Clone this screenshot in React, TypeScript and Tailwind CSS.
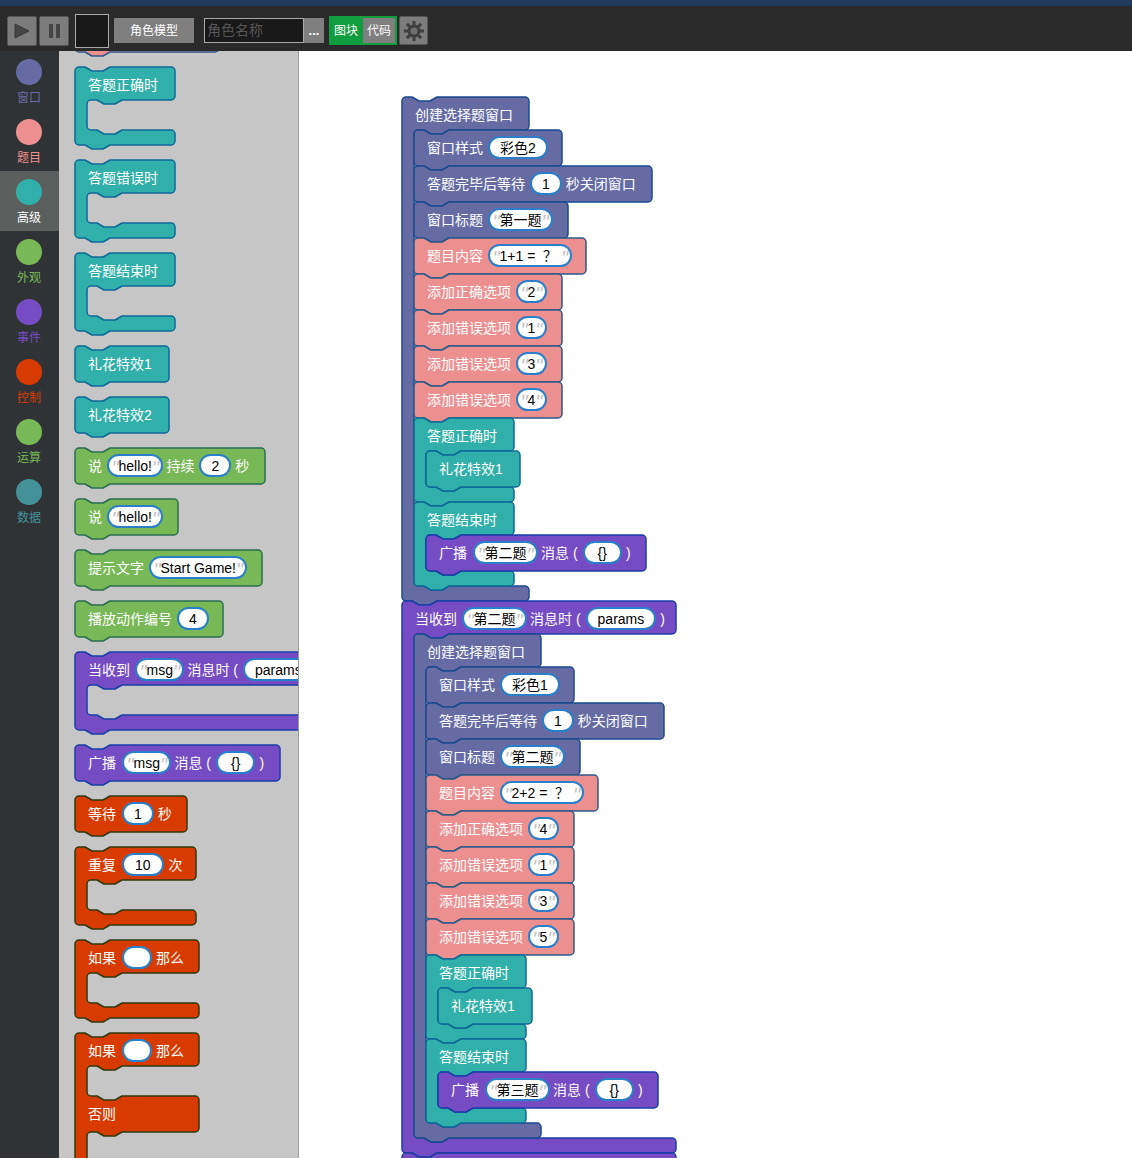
import type { ReactNode } from 'react';

type Theme = { fill: string; line: string };

const WIN: Theme = { fill: '#666ca3', line: '#1a4a90' };
const QUIZ: Theme = { fill: '#ec8f8f', line: '#2c5a8a' };
const FX: Theme = { fill: '#31afaa', line: '#0d6a96' };
const LOOK: Theme = { fill: '#78b856', line: '#2a6e50' };
const EVENT: Theme = { fill: '#764cc4', line: '#1a3ea8' };
const CTRL: Theme = { fill: '#d83b00', line: '#2f3a10' };

const HEAD = 33;
const FOOT = 15;

// one cavity of a C shaped block
type Arm = { head: number; gap: number };

const topEdge = (w: number) => `M0 4 A4 4 0 0 1 4 0 H10 L17 4 H28 L35 0 H${w - 4} A4 4 0 0 1 ${w} 4`;
const bottomEdge = (w: number, y: number) => `V${y - 4} A4 4 0 0 1 ${w - 4} ${y} H35 L28 ${y + 4} H17 L10 ${y} H4 A4 4 0 0 1 0 ${y - 4} Z`;

function stmtPath(w: number, h: number) {
  return topEdge(w - 2) + bottomEdge(w - 2, h);
}

function capPath(width: number, arms: Arm[]) {
  const w = width - 2;
  let d = topEdge(w);
  let y = 0;
  arms.forEach(({ head, gap }) => {
    y += head;
    const end = y + gap;
    d += `V${y - 4} A4 4 0 0 1 ${w - 4} ${y} H47 L40 ${y + 4} H29 L22 ${y} H16 A4 4 0 0 0 12 ${y + 4} V${end - 4} A4 4 0 0 0 16 ${end} H22 L29 ${end + 4} H40 L47 ${end} H${w - 4} A4 4 0 0 1 ${w} ${end + 4}`;
    y = end;
  });
  return d + bottomEdge(w, y + FOOT);
}

function Shape({ d, theme }: { d: string; theme: Theme }) {
  return (
    <svg className="absolute left-[0.75px] top-0 overflow-visible" width="1" height="1">
      <path d={d} fill={theme.fill} stroke={theme.line} strokeWidth="1.5" strokeLinejoin="round" />
    </svg>
  );
}

function Row({ children, className }: { children: ReactNode; className: string }) {
  return <div className={`relative flex items-center gap-[5px] whitespace-nowrap pl-[14px] text-[14px] text-white ${className}`}>{children}</div>;
}

function Stmt({ theme, w, children }: { theme: Theme; w: number; children?: ReactNode }) {
  return (
    <div className="relative h-[36px]" style={{ width: w }}>
      <Shape d={stmtPath(w, 36)} theme={theme} />
      <Row className="h-[36px]">{children}</Row>
    </div>
  );
}

function Cap({ theme, w, gap = 30, label, children }: { theme: Theme; w: number; gap?: number; label: ReactNode; children?: ReactNode }) {
  return (
    <div className="relative" style={{ width: w }}>
      <Shape d={capPath(w, [{ head: HEAD, gap }])} theme={theme} />
      <Row className="h-[33px] pt-[3px]">{label}</Row>
      <div className="relative pl-[12px]" style={{ height: gap }}>{children}</div>
      <div className="h-[15px]" />
    </div>
  );
}

function Pill({ children, className = '' }: { children?: ReactNode; className?: string }) {
  return (
    <span className={`mb-[1px] flex h-[23px] shrink-0 items-center justify-center rounded-full border-2 border-[#2a7fc8] bg-white pt-[1px] text-[14px] text-black ${className}`}>
      {children}
    </span>
  );
}

const Num = ({ v }: { v: string }) => <Pill className="-mr-px min-w-[31px] px-[10px]">{v}</Pill>;
const Sel = ({ v }: { v: string }) => <Pill className="-mr-px px-[10px]">{v}</Pill>;
const Blank = () => <Pill className="-mr-px ml-[1px] w-[30px]" />;

function Quote() {
  return <span className="mt-[1px] h-[16px] w-[7px] self-start text-[20px] italic leading-none text-[#c4c4c4]">"</span>;
}

function Str({ v }: { v: string }) {
  return (
    <Pill className="-mr-[2px] px-[2.5px]">
      <Quote />
      <span className="whitespace-pre">{v}</span>
      <Quote />
    </Pill>
  );
}

function Broadcast({ to, w }: { to: string; w: number }) {
  return (
    <Stmt theme={EVENT} w={w}>
      <span className="mr-[1px]">广播</span>
      <Str v={to} />
      <span>消息 (</span>
      <Pill className="-mr-px px-[13px]">{'{}'}</Pill>
      <span>)</span>
    </Stmt>
  );
}

function Question(props: { style: string; title: string; text: string; right: string; wrong: string[]; next: string }) {
  const { style, title, text, right, wrong, next } = props;
  return (
    <Cap theme={WIN} w={129} gap={456} label="创建选择题窗口">
      <Stmt theme={WIN} w={150}>窗口样式<Sel v={style} /></Stmt>
      <Stmt theme={WIN} w={240}>答题完毕后等待<Num v="1" />秒关闭窗口</Stmt>
      <Stmt theme={WIN} w={156}>窗口标题<Str v={title} /></Stmt>
      <Stmt theme={QUIZ} w={174}>题目内容<Str v={text} /></Stmt>
      <Stmt theme={QUIZ} w={150}>添加正确选项<Str v={right} /></Stmt>
      {wrong.map((item) => (
        <Stmt key={item} theme={QUIZ} w={150}>添加错误选项<Str v={item} /></Stmt>
      ))}
      <Cap theme={FX} w={102} gap={36} label="答题正确时">
        <Stmt theme={FX} w={96}>礼花特效1</Stmt>
      </Cap>
      <Cap theme={FX} w={102} gap={36} label="答题结束时">
        <Broadcast to={next} w={222} />
      </Cap>
    </Cap>
  );
}

function Toolbar() {
  return (
    <div className="shrink-0">
      <div className="h-[6px] bg-[#1f3a5a]" />
      <div className="flex h-[45px] items-center bg-[#2a2a2a] pl-[7px] pt-[4px]">
        <button className="flex h-[30px] w-[30px] items-center justify-center rounded-[2px] border border-[#555] bg-[#7c7c7c]">
          <svg width="18" height="18" viewBox="0 0 18 18">
            <path d="M2 2 L16 9 L2 16 Z" fill="#444" stroke="#3a3a3a" />
          </svg>
        </button>
        <button className="ml-[2px] flex h-[30px] w-[30px] items-center justify-center gap-[3px] rounded-[2px] border border-[#555] bg-[#7c7c7c]">
          <span className="h-[14px] w-[4px] bg-[#444]" />
          <span className="h-[14px] w-[4px] bg-[#444]" />
        </button>
        <div className="ml-[6px] h-[34px] w-[34px] border border-[#aaa] bg-[#191919]" />
        <div className="ml-[5px] flex h-[25px] w-[80px] items-center justify-center bg-[#7f7f7f] text-[12px] text-white">角色模型</div>
        <div className="ml-[10px] flex h-[25px] w-[100px] items-center border border-[#aaa] bg-[#191919] pl-[2px] text-[14px] text-[#555]">角色名称</div>
        <div className="flex h-[25px] w-[20px] items-center justify-center bg-[#7f7f7f] text-[13px] font-bold text-white">...</div>
        <div className="ml-[5px] flex h-[29px] w-[68px] items-center justify-between bg-[#0f9d3f] pl-[5px] pr-[2px] text-[12px] text-white">
          <span>图块</span>
          <span className="flex h-[25px] w-[32px] items-center justify-center bg-[#7f7f7f]">代码</span>
        </div>
        <button className="ml-[2px] flex h-[29px] w-[29px] items-center justify-center rounded-[2px] border border-[#555] bg-[#7c7c7c]">
          <svg width="22" height="22" viewBox="0 0 22 22">
            {[0, 45, 90, 135].map((a) => (
              <line key={a} x1="11" y1="1" x2="11" y2="21" stroke="#3e3e3e" strokeWidth="3" transform={`rotate(${a} 11 11)`} />
            ))}
            <circle cx="11" cy="11" r="6.5" fill="#3e3e3e" />
            <circle cx="11" cy="11" r="3.5" fill="#6e6e6e" />
          </svg>
        </button>
      </div>
    </div>
  );
}

const CATEGORIES = [
  { name: '窗口', dot: 'bg-[#666ca3]', text: 'text-[#666ca3]' },
  { name: '题目', dot: 'bg-[#ec8f8f]', text: 'text-[#ec8f8f]' },
  { name: '高级', dot: 'bg-[#31afaa]', text: 'text-white', active: true },
  { name: '外观', dot: 'bg-[#78b856]', text: 'text-[#78b856]' },
  { name: '事件', dot: 'bg-[#764cc4]', text: 'text-[#764cc4]' },
  { name: '控制', dot: 'bg-[#d83b00]', text: 'text-[#d83b00]' },
  { name: '运算', dot: 'bg-[#78b856]', text: 'text-[#78b856]' },
  { name: '数据', dot: 'bg-[#459199]', text: 'text-[#459199]' },
];

function Sidebar() {
  return (
    <div className="w-[59px] shrink-0 bg-[#2f3336]">
      {CATEGORIES.map((c) => (
        <div key={c.name} className={`flex h-[60px] flex-col items-center pr-[1px] pt-[8px] ${c.active ? 'bg-[#5a5f5e]' : ''}`}>
          <div className={`h-[26px] w-[26px] rounded-full ${c.dot}`} />
          <div className={`mt-[3px] text-[12px] leading-[20px] ${c.text}`}>{c.name}</div>
        </div>
      ))}
    </div>
  );
}

function IfElse() {
  const arms = [{ head: HEAD, gap: 30 }, { head: 36, gap: 60 }];
  return (
    <div className="relative w-[126px]">
      <Shape d={capPath(126, arms)} theme={CTRL} />
      <Row className="h-[33px] pt-[3px]">如果<Blank />那么</Row>
      <div className="h-[30px]" />
      <Row className="h-[36px]">否则</Row>
    </div>
  );
}

function Palette() {
  return (
    <div className="w-[240px] shrink-0 overflow-hidden border-r border-[#999] bg-[#c6c6c6]">
      <div className="-mt-[35px] flex flex-col gap-[15px] pl-[15px]">
        <Stmt theme={QUIZ} w={146} />
        <Cap theme={FX} w={102} label="答题正确时" />
        <Cap theme={FX} w={102} label="答题错误时" />
        <Cap theme={FX} w={102} label="答题结束时" />
        <Stmt theme={FX} w={96}>礼花特效1</Stmt>
        <Stmt theme={FX} w={96}>礼花特效2</Stmt>
        <Stmt theme={LOOK} w={192}>说<Str v="hello!" />持续<Num v="2" />秒</Stmt>
        <Stmt theme={LOOK} w={105}>说<Str v="hello!" /></Stmt>
        <Stmt theme={LOOK} w={189}>提示文字<Str v="Start Game!" /></Stmt>
        <Stmt theme={LOOK} w={150}>播放动作编号<Num v="4" /></Stmt>
        <Cap
          theme={EVENT}
          w={300}
          label={
            <>
              当收到<Str v="msg" />消息时 (<Sel v="params" />)
            </>
          }
        />
        <Broadcast to="msg" w={207} />
        <Stmt theme={CTRL} w={114}><span className="mr-[1px]">等待</span><Num v="1" />秒</Stmt>
        <Cap theme={CTRL} w={123} label={<><span className="mr-[1px]">重复</span><Pill className="px-[11px]">10</Pill>次</>} />
        <Cap theme={CTRL} w={126} label={<>如果<Blank />那么</>} />
        <IfElse />
      </div>
    </div>
  );
}

function Workspace() {
  return (
    <div className="flex-1 overflow-hidden bg-white pl-[102px] pt-[46px]">
      <Question
        style="彩色2"
        title="第一题"
        text={'1+1 =  ？ '}
        right="2"
        wrong={['1', '3', '4']}
        next="第二题"
      />
      <Cap
        theme={EVENT}
        w={276}
        gap={504}
        label={
          <>
            当收到<Str v="第二题" />消息时 (<Sel v="params" />)
          </>
        }
      >
        <Question
          style="彩色1"
          title="第二题"
          text={'2+2 =  ？ '}
          right="4"
          wrong={['1', '3', '5']}
          next="第三题"
        />
      </Cap>
      <Stmt theme={EVENT} w={276} />
    </div>
  );
}

export default function App() {
  return (
    <div className="flex h-screen w-screen flex-col overflow-hidden font-['Liberation_Sans','Noto_Sans_CJK_SC',sans-serif]">
      <Toolbar />
      <div className="flex min-h-0 flex-1">
        <Sidebar />
        <Palette />
        <Workspace />
      </div>
    </div>
  );
}
